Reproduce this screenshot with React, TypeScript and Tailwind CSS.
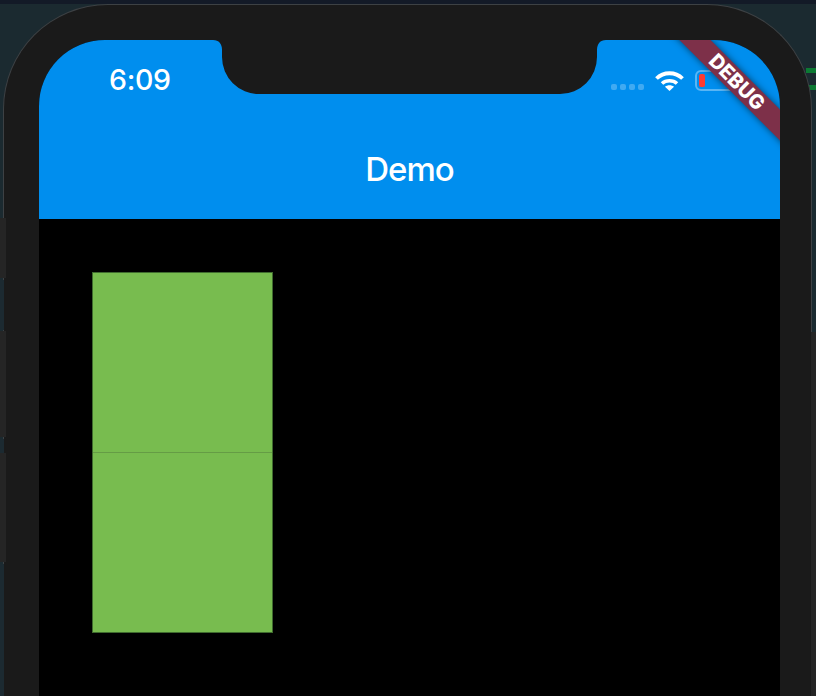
const font = "font-['Inter','Liberation_Sans',sans-serif]"

function Notch() {
  return (
    <svg
      width="400"
      height="54"
      viewBox="0 0 400 54"
      className="absolute top-0 left-[171px]"
    >
      <path
        d="M3 0C9 0 12 4 12 10V17A37 37 0 0 0 49 54H350A37 37 0 0 0 387 17V10C387 4 390 0 396 0Z"
        fill="#1a1a1a"
      />
    </svg>
  )
}

function WifiIcon() {
  return (
    <svg width="29" height="21" viewBox="0 0 29 21" fill="none">
      <path d="M1.5 8.5C8.5 1.5 20.5 1.5 27.5 8.5" stroke="white" strokeWidth="3.8" />
      <path d="M7 13.5C11 9.8 18 9.8 22 13.5" stroke="white" strokeWidth="3.6" />
      <path d="M14.5 21L10 16.8C12.4 14.8 16.6 14.8 19 16.8Z" fill="white" />
    </svg>
  )
}

function SignalDots() {
  return (
    <div className="mt-[14px] flex gap-[3px]">
      <span className="size-[6px] rounded-[2px] bg-white/25" />
      <span className="size-[6px] rounded-[2px] bg-white/25" />
      <span className="size-[6px] rounded-[2px] bg-white/25" />
      <span className="size-[6px] rounded-[2px] bg-white/25" />
    </div>
  )
}

function Battery() {
  return (
    <div className="flex h-[21px] w-[41px] items-center rounded-[6px] border-2 border-white/35 pl-[2px]">
      <span className="h-[13px] w-[6px] rounded-[2px] bg-[#ff3b30]" />
    </div>
  )
}

function SideRail() {
  return (
    <div className="absolute top-[218px] left-0 flex w-[6px] flex-col">
      <div className="h-[60px] bg-[#252525]" />
      <div className="mt-[2px] h-[50px] w-[4px] bg-[#1c2a31]" />
      <div className="mt-[1px] h-[106px] bg-[#252525]" />
      <div className="mt-[2px] h-[14px] w-[4px] bg-[#1c2a31]" />
      <div className="h-[109px] bg-[#252525]" />
      <div className="mt-[2px] h-[134px] w-[4px] bg-[#1c2a31]" />
    </div>
  )
}

export default function App() {
  return (
    <div className={`relative flex h-[696px] w-[816px] flex-col overflow-hidden bg-[#1b2a30] ${font}`}>
      <div className="h-[4px] shrink-0 bg-[#131a27]" />

      {/* green marks behind the frame on the right */}
      <div className="absolute top-[68px] right-0 h-[5px] w-[10px] bg-[#0c7a33]" />
      <div className="absolute top-[85px] right-0 h-[5px] w-[10px] bg-[#0c7a33]" />

      <div className="relative mr-[4px] ml-[3px] flex-1 rounded-t-[105px] border-x border-t border-[#3d4144] bg-[#1a1a1a] pt-[35px] pl-[35px]">
        <div className="flex h-full w-[741px] flex-col overflow-hidden rounded-t-[66px] bg-black">
          <header className="relative h-[179px] shrink-0 bg-[#008eee] text-white">
            <Notch />
            <div className="flex h-[80px] items-center pr-[44px] pl-[70px]">
              <span className="text-[28.5px] leading-none font-medium tracking-[-0.3px]">6:09</span>
              <div className="ml-auto flex items-center">
                <SignalDots />
                <div className="mr-[11px] ml-[11px]">
                  <WifiIcon />
                </div>
                <Battery />
              </div>
            </div>
            <div className="flex h-[99px] items-center justify-center">
              <span className="text-[33px] leading-none font-medium tracking-[-1px]">Demo</span>
            </div>
            <div className="absolute top-[31px] left-[588px] flex h-[22px] w-[220px] rotate-45 items-center justify-center bg-[#7d3049] text-[20px] leading-none font-extrabold shadow-[0_0_7px_rgba(0,0,0,0.55)]">
              DEBUG
            </div>
          </header>

          <main className="flex-1 pt-[53px] pl-[53px]">
            <div className="w-[181px] border border-[#3f6b2e] bg-[#78bc4f]">
              <div className="h-[179px]" />
              <div className="h-[180px] border-t border-[#659c45]" />
            </div>
          </main>
        </div>
      </div>

      <SideRail />
      <div className="absolute top-[332px] right-0 h-[364px] w-[5px] bg-[#252525]" />
    </div>
  )
}
